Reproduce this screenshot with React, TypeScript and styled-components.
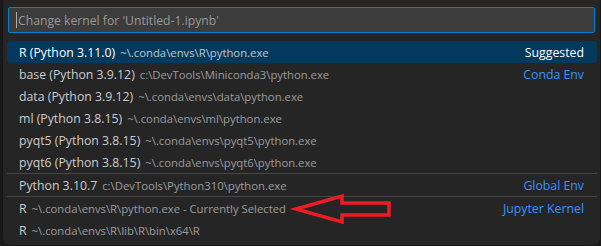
import React from "react";
import styled, { createGlobalStyle } from "styled-components";

const GlobalStyle = createGlobalStyle`
  html, body {
    margin: 0;
    padding: 0;
    background: #1f1f1f;
    overflow: hidden;
  }
  body {
    font-family: "Open Sans", "Noto Sans", sans-serif;
    font-size: 12.3px;
    color: #cccccc;
  }
`;

const Page = styled.div`
  position: relative;
  width: 601px;
  height: 246px;
`;

const Widget = styled.div`
  margin: 0 1px 0 3px;
  height: 245px;
  box-sizing: border-box;
  background: #252526;
  border-radius: 0 0 6px 6px;
  box-shadow: 0 0 8px 2px rgba(0, 0, 0, 0.36);
  padding: 7px 0 0 0;
  display: flex;
  flex-direction: column;
`;

const InputBox = styled.div`
  margin: 0 5px 0 5px;
  height: 26px;
  box-sizing: border-box;
  background: #3c3c3c;
  border: 1px solid #007fd4;
  border-radius: 2px;
  display: flex;
  align-items: center;
  padding-left: 7px;
`;

const Caret = styled.span`
  width: 1px;
  height: 16px;
  background: #aeafad;
  margin-right: 1px;
`;

const Placeholder = styled.span`
  color: #989898;
  font-size: 12.2px;
  white-space: nowrap;
`;

const List = styled.div`
  margin: 8px 3px 0 4px;
  display: flex;
  flex-direction: column;
`;

const Row = styled.div<{ $selected?: boolean; $divider?: boolean }>`
  height: 22px;
  display: flex;
  align-items: center;
  padding: 0 13px 0 12px;
  border-radius: 3px;
  white-space: nowrap;
  background: ${({ $selected }) => ($selected ? "#04395e" : "transparent")};
  color: ${({ $selected }) => ($selected ? "#ffffff" : "#cccccc")};
  border-top: ${({ $divider }) => ($divider ? "1px solid #454545" : "none")};
  border-top-left-radius: ${({ $divider }) => ($divider ? "0" : "3px")};
  border-top-right-radius: ${({ $divider }) => ($divider ? "0" : "3px")};
`;

const Label = styled.span``;

const Description = styled.span`
  margin-left: 5px;
  font-size: 11.3px;
  opacity: 0.7;
  flex: 1;
`;

const Tag = styled.span<{ $selected?: boolean }>`
  margin-left: auto;
  color: ${({ $selected }) => ($selected ? "#ffffff" : "#3794ff")};
`;

const Arrow = styled.svg`
  position: absolute;
  left: 0;
  top: 0;
  pointer-events: none;
`;

type Item = {
  label: string;
  description: string;
  tag?: string;
  selected?: boolean;
  divider?: boolean;
};

const items: Item[] = [
  { label: "R (Python 3.11.0)", description: "~\\.conda\\envs\\R\\python.exe", tag: "Suggested", selected: true },
  { label: "base (Python 3.9.12)", description: "c:\\DevTools\\Miniconda3\\python.exe", tag: "Conda Env" },
  { label: "data (Python 3.9.12)", description: "~\\.conda\\envs\\data\\python.exe" },
  { label: "ml (Python 3.8.15)", description: "~\\.conda\\envs\\ml\\python.exe" },
  { label: "pyqt5 (Python 3.8.15)", description: "~\\.conda\\envs\\pyqt5\\python.exe" },
  { label: "pyqt6 (Python 3.8.15)", description: "~\\.conda\\envs\\pyqt6\\python.exe" },
  { label: "Python 3.10.7", description: "c:\\DevTools\\Python310\\python.exe", tag: "Global Env", divider: true },
  { label: "R", description: "~\\.conda\\envs\\R\\python.exe - Currently Selected", tag: "Jupyter Kernel", divider: true },
  { label: "R", description: "~\\.conda\\envs\\R\\lib\\R\\bin\\x64\\R" },
];

export default function App() {
  return (
    <Page>
      <GlobalStyle />
      <Widget>
        <InputBox>
          <Caret />
          <Placeholder>Change kernel for 'Untitled-1.ipynb'</Placeholder>
        </InputBox>
        <List>
          {items.map((item, i) => (
            <Row key={i} $selected={item.selected} $divider={item.divider}>
              <Label>{item.label}</Label>
              <Description>{item.description}</Description>
              {item.tag && <Tag $selected={item.selected}>{item.tag}</Tag>}
            </Row>
          ))}
        </List>
      </Widget>
      <Arrow width="601" height="246" viewBox="0 0 601 246">
        <polygon
          points="296,209 342,196 342,203 389,203 389,215 342,215 342,222"
          fill="none"
          stroke="#ed1c24"
          strokeWidth="3.5"
          strokeLinejoin="miter"
        />
      </Arrow>
    </Page>
  );
}
